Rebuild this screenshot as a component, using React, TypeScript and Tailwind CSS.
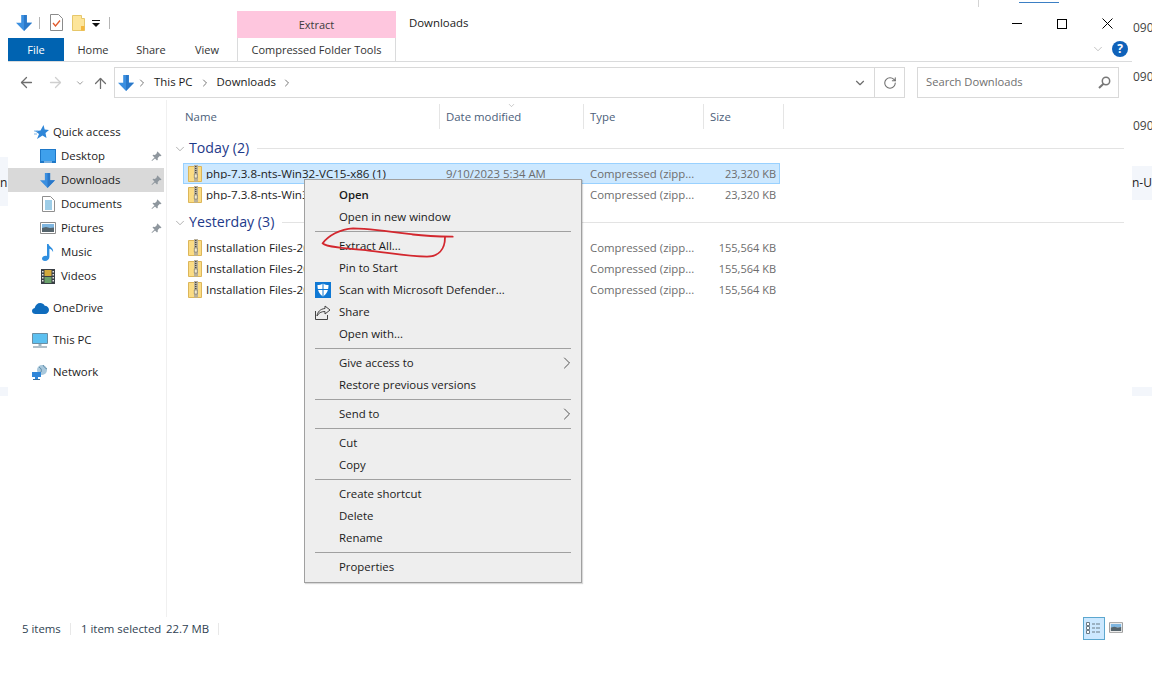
import { ArrowLeft, ArrowRight, ArrowUp, ChevronDown, ChevronRight, RotateCw } from "lucide-react";

function DownArrow({ size = 16 }: { size?: number }) {
  return (
    <svg width={size} height={size} viewBox="0 0 16 16" className="shrink-0">
      <path d="M5.2 0h5.6v7.8H16L8 16 0 7.8h5.2z" fill="#3b8fe0" />
      <path d="M8 0h2.8v7.8H16L8 16z" fill="#2a78c9" />
    </svg>
  );
}

function Zip() {
  return (
    <svg width="14" height="17" viewBox="0 0 14 17" className="shrink-0">
      <path d="M.5 1.5h13v15H.5z" fill="#fbdc84" stroke="#dcb65a" />
      <path d="M6 0h4v16.5H6z" fill="#b9b09a" />
      <path d="M7 1h1.500v1H7zM7 3h1.500v1H7zM7 5h1.500v1H7zM7 7h1.500v1H7z" fill="#4a4a42" />
      <path d="M6.300 9h3v4h-3z" fill="#efe8d0" stroke="#77715f" strokeWidth=".6" />
    </svg>
  );
}

function Pin() {
  return (
    <svg width="11" height="11" viewBox="0 0 11 11" className="shrink-0">
      <path d="M6.5.5l4 4-1 .7-.8-.2-2 2 .1 1.800-.8.7-2-2L1 10l-.5-.4 3-3-2-2 .7-.8 1.800.1 2-2-.2-.8z" fill="#8f979e" />
    </svg>
  );
}

function Star() {
  return (
    <svg width="15" height="14" viewBox="0 0 15 14" className="ml-[2px]">
      <path d="M9.5 0l1.200 4.600L15 5l-3.500 3 1 5-4-2.600L3 14l2-5-4-3 5.500-.6z" fill="#2f86d8" />
      <path d="M0 6h4M0 9h3" stroke="#7db7ea" />
    </svg>
  );
}

function DesktopIcon() {
  return (
    <svg width="16" height="14" viewBox="0 0 16 14">
      <path d="M0 0h16v14H0z" fill="#1e78c8" />
      <path d="M1 1h14v11H1z" fill="#3fa0ec" />
      <path d="M4 13h8" stroke="#cfe6f8" />
    </svg>
  );
}

function DocIcon() {
  return (
    <svg width="13" height="16" viewBox="0 0 13 16" className="ml-[2px]">
      <path d="M.5.500h8l4 4v11H.5z" fill="#fff" stroke="#8f8f8f" />
      <path d="M3 5h7M3 7h7M3 9h7M3 11h7M3 13h7" stroke="#3c9bd0" />
    </svg>
  );
}

function PicIcon({ w = 16, h = 12 }: { w?: number; h?: number }) {
  return (
    <svg width={w} height={h} viewBox="0 0 16 12">
      <path d="M.5.500h15v11H.5z" fill="#fff" stroke="#8c8c8c" />
      <path d="M2 2h12v4H2z" fill="#7fb6e0" />
      <path d="M2 6l4-1 4 1 4-.5V10H2z" fill="#55646c" />
    </svg>
  );
}

function MusicIcon() {
  return (
    <svg width="12" height="17" viewBox="0 0 12 17" className="ml-[2px]">
      <path d="M5 0h1.600c.4 3 5.400 3.600 4.400 8-.6-2-2.400-3-3.600-3.200V13c0 2.200-2 4-4.400 4C1 17 0 16 0 14.600 0 12.800 2.400 11.400 5 12z" fill="#2f8fe0" />
    </svg>
  );
}

function VideoIcon() {
  return (
    <svg width="14" height="15" viewBox="0 0 14 15" className="ml-[1px]">
      <path d="M0 0h14v15H0z" fill="#3a3f45" />
      <path d="M3.500 1h7v6h-7z" fill="#d2a93c" />
      <path d="M3.500 8h7v6h-7z" fill="#6aa06a" />
      <path d="M1 2h1.500v1.500H1zM1 5h1.500v1.500H1zM1 8h1.500v1.500H1zM1 11h1.500v1.500H1zM11.500 2H13v1.500h-1.500zM11.500 5H13v1.500h-1.500zM11.500 8H13v1.500h-1.500zM11.500 11H13v1.500h-1.500z" fill="#e6e6e6" />
    </svg>
  );
}

function CloudIcon() {
  return (
    <svg width="17" height="11" viewBox="0 0 17 11">
      <path d="M3.500 11C1.500 11 0 9.700 0 8c0-1.500 1.100-2.700 2.700-3C3.300 2 5.500 0 8.200 0c2 0 3.700 1 4.500 2.800C15 2.800 17 4.700 17 7c0 2.200-1.800 4-4 4z" fill="#0f6cbd" />
    </svg>
  );
}

function PcIcon() {
  return (
    <svg width="16" height="15" viewBox="0 0 16 15">
      <path d="M.5.500h15v10H.5z" fill="#5cc0f0" stroke="#6b8ea3" />
      <path d="M6.500 11h3v2h-3z" fill="#9fb5c2" />
      <path d="M1 14h14" stroke="#8ea4b0" strokeWidth="1.400" />
    </svg>
  );
}

function NetIcon() {
  return (
    <svg width="16" height="15" viewBox="0 0 16 15">
      <circle cx="10" cy="5" r="5" fill="#a9c8dc" />
      <path d="M7 2c2 1 3 3 2 5M11 0c1 2 2 3 4 4" stroke="#5c8aa6" fill="none" />
      <path d="M0 7h9v5H0z" fill="#2f86d8" />
      <path d="M3 12h3v2H3z" fill="#2f86d8" />
      <path d="M1 14.500h7" stroke="#3a6f9c" />
    </svg>
  );
}

function NavRow({ icon, label, pin, active, indent }: { icon: React.ReactNode; label: string; pin?: boolean; active?: boolean; indent?: boolean }) {
  return (
    <div className={`flex h-6 items-center ${active ? "bg-[#d9d9d9]" : ""} ${indent ? "pl-[32px]" : "pl-[24px]"}`}>
      <span className="flex w-[21px] shrink-0 items-center justify-start">{icon}</span>
      <span className="text-[#1c1c1c]">{label}</span>
      {pin && (
        <span className="ml-auto mr-[2px]">
          <Pin />
        </span>
      )}
    </div>
  );
}

function Group({ label }: { label: string }) {
  return (
    <div className="flex h-[21px] items-center pr-[8px]">
      <ChevronDown size={14} strokeWidth={1} className="ml-[6px] text-[#7a7a7a]" />
      <span className="ml-[2px] text-[14.2px] text-[#1e3a8a]">{label}</span>
      <span className="ml-2 h-px flex-1 bg-[#e3e3e3]" />
    </div>
  );
}

function FileRow({ name, date, size, selected }: { name: string; date: string; size: string; selected?: boolean }) {
  return (
    <div className={`ml-[16px] flex h-[21px] w-[597px] items-center border ${selected ? "border-[#99d1ff] bg-[#cce8ff]" : "border-transparent"}`}>
      <span className="ml-[4px] w-[18px]">
        <Zip />
      </span>
      <span className="w-[240px] truncate text-[11.6px] text-[#1c1c1c]">{name}</span>
      <span className="w-[144px] text-[#6d6d6d]">{date}</span>
      <span className="w-[116px] text-[#6d6d6d]">Compressed (zipp...</span>
      <span className="w-[70px] text-right text-[11px] text-[#6d6d6d]">{size}</span>
    </div>
  );
}

function Sep() {
  return (
    <div className="flex h-[7px] items-center pl-[10px] pr-[10px]">
      <div className="h-px w-full bg-[#a0a0a0]" />
    </div>
  );
}

function Item({ label, bold, icon, arrow }: { label: string; bold?: boolean; icon?: React.ReactNode; arrow?: boolean }) {
  return (
    <div className="flex h-[22px] items-center text-[#1a1a1a]">
      <span className="flex w-[34px] shrink-0 justify-center pl-[2px]">{icon}</span>
      <span className={bold ? "font-semibold" : ""}>{label}</span>
      {arrow && <ChevronRight size={20} strokeWidth={1.1} className="ml-auto mr-[4px] text-[#444]" />}
    </div>
  );
}

function Shield() {
  return (
    <svg width="16" height="16" viewBox="0 0 16 16">
      <path d="M0 0h16v16H0z" fill="#0f78d4" />
      <path d="M8 1.500c1.800 1.100 3.500 1.500 5.500 1.500 0 5.500-1.800 9-5.500 11.500C4.300 12 2.500 8.500 2.500 3c2 0 3.700-.4 5.500-1.500z" fill="#fff" />
      <path d="M8 1v13M2 7.500h12" stroke="#0f78d4" strokeWidth="1" />
    </svg>
  );
}

function ShareIcon() {
  return (
    <svg width="16" height="15" viewBox="0 0 16 15" fill="none" stroke="#444">
      <path d="M10 1l5 4-5 4V6.500C6 6.500 3.500 8 2 11c.500-4 3-7 8-7.500z" />
      <path d="M.5 6v8.500h12V10" />
    </svg>
  );
}

export default function App() {
  return (
    <div className="relative h-[682px] w-[1152px] overflow-hidden bg-white font-['Open_Sans',sans-serif] text-[11.4px] leading-none">
      {/* windows peeking out behind the explorer */}
      <div className="absolute left-[978px] top-0 h-[7px] w-px bg-[#d4d4d4]" />
      <div className="absolute left-[1019px] top-[2px] h-px w-[40px] bg-[#3b7fc4]" />
      <div className="absolute left-0 top-[157px] flex h-[49px] w-[8px] items-center bg-[#f3f6fb] pt-[2px] text-[12px] text-[#222]">n</div>
      <div className="absolute left-0 top-[387px] h-[9px] w-[8px] bg-[#f3f6fb]" />
      <div className="absolute left-[1132px] top-[166px] flex h-[34px] w-[20px] items-center overflow-hidden whitespace-nowrap bg-[#f3f6fb] text-[12px] text-[#222]">n-U</div>
      <div className="absolute left-[1132px] top-[387px] h-[9px] w-[20px] bg-[#f3f6fb]" />
      <div className="absolute left-[1133px] top-[22px] w-[19px] overflow-hidden text-[12px] text-[#444]">090</div>
      <div className="absolute left-[1133px] top-[71px] w-[19px] overflow-hidden text-[12px] text-[#444]">090</div>
      <div className="absolute left-[1133px] top-[120px] w-[19px] overflow-hidden text-[12px] text-[#444]">090</div>

      <div className="flex h-full w-[1132px] flex-col">
        {/* title row */}
        <div className="flex h-[38px] shrink-0 items-end">
          <div className="mb-[7px] ml-[16px] flex items-center">
            <DownArrow />
            <span className="ml-[7px] h-[12px] w-px bg-[#b5b5b5]" />
            <svg width="13" height="17" viewBox="0 0 13 17" className="ml-[10px]">
              <path d="M.5.500h8l4 4v12H.5z" fill="#fff" stroke="#8b8b8b" />
              <path d="M3 9l2.500 3L10 6.500" fill="none" stroke="#e0592a" strokeWidth="1.300" />
            </svg>
            <svg width="13" height="16" viewBox="0 0 13 16" className="ml-[9px]">
              <path d="M.5.500h9v3h3v12H.5z" fill="#fde59a" stroke="#e6c76a" />
              <path d="M9 11h3.500v4.500H9z" fill="#f4b73e" />
            </svg>
            <svg width="8" height="7" viewBox="0 0 8 7" className="ml-[7px] mt-[2px]">
              <path d="M0 0h8v1H0zM0 3h8L4 7z" fill="#111" />
            </svg>
            <span className="ml-[9px] h-[12px] w-px bg-[#b5b5b5]" />
          </div>
          <div className="ml-[127px] flex h-[27px] w-[159px] items-center justify-center bg-[#fec6de] text-[11px] text-[#3c3c3c]">Extract</div>
          <div className="mb-[10px] ml-[13px] text-[#1a1a1a]">Downloads</div>
          <div className="mb-[9px] ml-auto flex items-center">
            <span className="h-px w-[10px] bg-black" />
            <span className="ml-[35px] h-[10px] w-[10px] border border-black" />
            <svg width="11" height="11" viewBox="0 0 11 11" className="ml-[35px] mr-[19px]" stroke="#000">
              <path d="M.5.500l10 10M10.500.500l-10 10" />
            </svg>
          </div>
        </div>
        {/* tab row */}
        <div className="ml-[8px] flex h-[24px] shrink-0 items-stretch border-b border-[#dadbdc] text-[11px]">
          <div className="flex w-[56px] items-center justify-center bg-[#0063b1] pb-[1px] text-white">File</div>
          <div className="flex w-[58px] items-center justify-center pb-[1px] text-[#333]">Home</div>
          <div className="flex w-[58px] items-center justify-center pb-[1px] text-[#333]">Share</div>
          <div className="flex w-[54px] items-center justify-center pb-[1px] text-[#333]">View</div>
          <div className="ml-[3px] flex w-[159px] items-center justify-center border-x border-[#dadbdc] bg-white pb-[1px] text-[#333]">Compressed Folder Tools</div>
          <ChevronDown size={14} strokeWidth={1} className="ml-auto mt-[4px] text-[#9a9a9a]" />
          <div className="ml-[7px] mr-[4px] mt-[3px] flex h-4 w-4 items-center justify-center rounded-full bg-[#0f62ba] text-[12px] font-bold text-white">?</div>
        </div>
        {/* address row */}
        <div className="mt-[5px] flex h-[31px] shrink-0 items-center">
          <ArrowLeft size={17} strokeWidth={1.8} className="ml-[18px] text-[#6e6e6e]" />
          <ArrowRight size={17} strokeWidth={1.8} className="ml-[12px] text-[#cfcfcf]" />
          <ChevronDown size={10} strokeWidth={2} className="ml-[11px] text-[#8a8a8a]" />
          <ArrowUp size={17} strokeWidth={1.8} className="ml-[7px] mt-[1px] text-[#6e6e6e]" />
          <div className="ml-[5px] flex h-full w-[791px] border border-[#d9d9d9]">
            <div className="flex flex-1 items-center pl-[3px]">
              <DownArrow />
              <ChevronRight size={12} strokeWidth={2} className="ml-[2px] text-[#777]" />
              <span className="ml-[6px] pb-[1px] text-[#1a1a1a]">This PC</span>
              <ChevronRight size={12} strokeWidth={2} className="ml-[6px] text-[#777]" />
              <span className="ml-[6px] pb-[1px] text-[#1a1a1a]">Downloads</span>
              <ChevronRight size={12} strokeWidth={2} className="ml-[5px] text-[#777]" />
              <ChevronDown size={14} strokeWidth={2} className="ml-auto mr-[7px] text-[#6d6d6d]" />
            </div>
            <div className="flex w-[30px] items-center justify-center border-l border-[#d9d9d9]">
              <RotateCw size={14} strokeWidth={1.8} className="text-[#6d6d6d]" />
            </div>
          </div>
          <div className="ml-[12px] flex h-full w-[202px] items-center border border-[#d9d9d9] pb-[1px] pl-[8px] text-[11.2px] text-[#6f6f6f]">
            Search Downloads
            <svg width="13" height="13" viewBox="0 0 13 13" className="ml-auto mr-[7px]" fill="none" stroke="#777" strokeWidth="1.500">
              <circle cx="8" cy="5" r="3.700" />
              <path d="M5.500 7.700L1 12" strokeWidth="2" />
            </svg>
          </div>
        </div>
        {/* body */}
        <div className="mt-[2px] flex min-h-0 flex-1">
          <div className="w-[167px] shrink-0 border-r border-[#f0f0f0] pl-[8px] pr-[2px] pt-[20px]">
            <NavRow icon={<Star />} label="Quick access" />
            <NavRow indent icon={<DesktopIcon />} label="Desktop" pin />
            <NavRow indent active icon={<DownArrow size={15} />} label="Downloads" pin />
            <NavRow indent icon={<DocIcon />} label="Documents" pin />
            <NavRow indent icon={<PicIcon />} label="Pictures" pin />
            <NavRow indent icon={<MusicIcon />} label="Music" />
            <NavRow indent icon={<VideoIcon />} label="Videos" />
            <div className="h-2" />
            <NavRow icon={<CloudIcon />} label="OneDrive" />
            <div className="h-2" />
            <NavRow icon={<PcIcon />} label="This PC" />
            <div className="h-2" />
            <NavRow icon={<NetIcon />} label="Network" />
          </div>
          <div className="relative min-w-0 flex-1">
            {/* column headers */}
            <div className="flex h-[29px] items-center pt-[4px] text-[#4c607a]">
              <span className="ml-[18px] w-[254px]">Name</span>
              <span className="h-[25px] w-px bg-[#e5e5e5]" />
              <span className="ml-[6px] w-[137px]">Date modified</span>
              <span className="h-[25px] w-px bg-[#e5e5e5]" />
              <span className="ml-[6px] w-[113px]">Type</span>
              <span className="h-[25px] w-px bg-[#e5e5e5]" />
              <span className="ml-[6px] w-[73px]">Size</span>
              <span className="h-[25px] w-px bg-[#e5e5e5]" />
            </div>
            <ChevronDown size={9} strokeWidth={1.2} className="absolute left-[340px] top-[1px] text-[#8a8a8a]" />
            <div className="pt-[9px]">
              <Group label="Today (2)" />
              <div className="mt-[4px]">
                <FileRow selected name="php-7.3.8-nts-Win32-VC15-x86 (1)" date="9/10/2023 5:34 AM" size="23,320 KB" />
                <FileRow name="php-7.3.8-nts-Win32-VC15-x86" date="9/10/2023 5:34 AM" size="23,320 KB" />
              </div>
              <div className="mt-[7px]">
                <Group label="Yesterday (3)" />
              </div>
              <div className="mt-[4px]">
                <FileRow name="Installation Files-2023" date="9/9/2023 6:10 PM" size="155,564 KB" />
                <FileRow name="Installation Files-2023 (1)" date="9/9/2023 6:10 PM" size="155,564 KB" />
                <FileRow name="Installation Files-2023 (2)" date="9/9/2023 6:10 PM" size="155,564 KB" />
              </div>
            </div>
          </div>
        </div>
        {/* status bar */}
        <div className="flex h-[23px] shrink-0 items-center text-[#2f3f52]">
          <span className="ml-[22px] w-[48px]">5 items</span>
          <span className="h-[12px] w-px bg-[#e8e8e8]" />
          <span className="ml-[10px] w-[85px]">1 item selected</span>
          <span className="w-[52px]">22.7 MB</span>
          <span className="h-[12px] w-px bg-[#e8e8e8]" />
          <div className="ml-auto mr-[27px] flex h-[23px] w-[22px] items-center justify-center border border-[#5ca7cf] bg-[#cce8ff]">
            <svg width="16" height="13" viewBox="0 0 16 13" fill="none" stroke="#6b7a85">
              <path d="M.5.500h3v3h-3zM.5 4.500h3v3h-3zM.5 8.500h3v3h-3z" fill="#fff" />
              <path d="M6 2h3M10 2h4M6 6h3M10 6h4M6 10h3M10 10h4" />
            </svg>
          </div>
          <div className="absolute left-[1109px] top-[622px]">
            <PicIcon w={14} h={11} />
          </div>
        </div>
        <div className="h-[42px] shrink-0" />
      </div>

      {/* context menu */}
      <div className="absolute left-[304px] top-[179px] w-[278px] border border-[#a0a0a0] bg-[#eeeeee] py-[4px] shadow-[1px_1px_1px_rgba(0,0,0,0.15)]">
        <Item bold label="Open" />
        <Item label="Open in new window" />
        <Sep />
        <Item label="Extract All..." />
        <Item label="Pin to Start" />
        <Item label="Scan with Microsoft Defender..." icon={<Shield />} />
        <Item label="Share" icon={<ShareIcon />} />
        <Item label="Open with..." />
        <Sep />
        <Item label="Give access to" arrow />
        <Item label="Restore previous versions" />
        <Sep />
        <Item label="Send to" arrow />
        <Sep />
        <Item label="Cut" />
        <Item label="Copy" />
        <Sep />
        <Item label="Create shortcut" />
        <Item label="Delete" />
        <Item label="Rename" />
        <Sep />
        <Item label="Properties" />
      </div>

      {/* red pen annotation */}
      <svg width="140" height="40" viewBox="320 225 140 40" className="absolute left-[320px] top-[225px]" fill="none" stroke="#d3272e" strokeWidth="1.8" strokeLinecap="round">
        <path d="M452.700 236.700C435 236.500 425 236 413 234.500C395 232 375 229 353 228.300C340 229 328 236 322.700 243.300C326 247 345 248.500 367 250.300C385 252 405 256 427 256.700C438 256.500 445 250 445 237.300" />
      </svg>
    </div>
  );
}
